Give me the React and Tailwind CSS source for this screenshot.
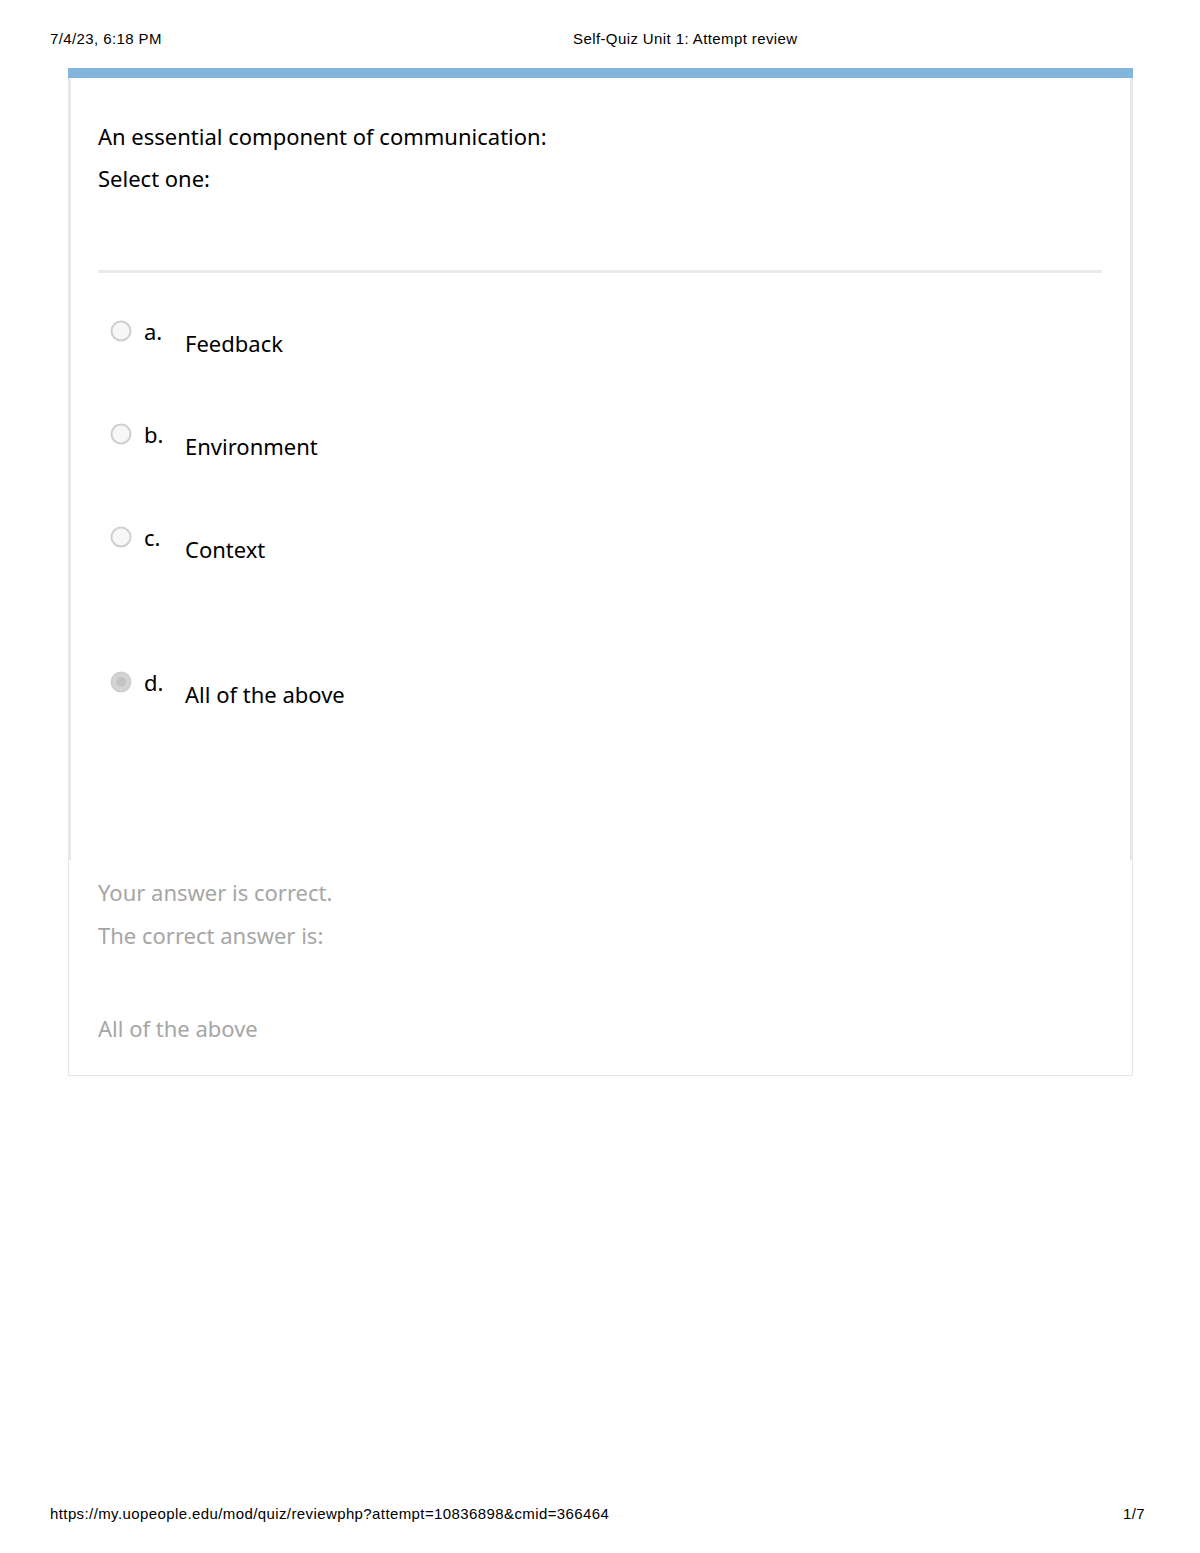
import React from "react";

const options = [
  { letter: "a.", text: "Feedback", checked: false, gap: "h-[63px]" },
  { letter: "b.", text: "Environment", checked: false, gap: "h-[63px]" },
  { letter: "c.", text: "Context", checked: false, gap: "h-[105px]" },
  { letter: "d.", text: "All of the above", checked: true, gap: "" },
];

function Radio({ checked }) {
  return (
    <svg width="22" height="22" viewBox="0 0 22 22" className="shrink-0">
      <circle cx="11" cy="11" r="9.5" fill={checked ? "#d4d4d4" : "#f7f7f7"} stroke="#cfcfcf" strokeWidth="2" />
      {checked && <circle cx="11" cy="11" r="5" fill="#c4c4c4" />}
    </svg>
  );
}

export default function App() {
  return (
    <div className="w-[1200px] h-[1553px] bg-white relative flex flex-col">
      <div className="flex pt-[30px] pl-[50px] text-[15px] text-black font-['Liberation_Sans',Arial,sans-serif] leading-[17px] tracking-[0.4px]">
        <span className="w-[523px]">7/4/23, 6:18 PM</span>
        <span>Self-Quiz Unit 1: Attempt review</span>
      </div>

      <div className="ml-[68px] mt-[21px] w-[1065px] font-['Noto_Sans','Open_Sans',sans-serif]">
        <div className="h-[10px] bg-[#82b6dd]" />
        <div className="border-x-[3px] border-[#e4e7eb] pl-[27px] pr-[28px] h-[782px]">
          <div className="pt-[37px] text-[22px] leading-[42px] text-black">
            <p>An essential component of communication:</p>
            <p>Select one:</p>
          </div>
          <div className="mt-[71px] h-[3px] bg-[#e8eaed]" />
          <div className="pt-[39px] pl-[12px]">
            {options.map((o) => (
              <div key={o.letter}>
                <div className="flex items-start h-[40px]">
                  <div className="pt-[8px]"><Radio checked={o.checked} /></div>
                  <span className="ml-[12px] w-[41px] text-[22px] leading-[38px] text-black">{o.letter}</span>
                  <span className="mt-[12px] text-[22px] leading-[38px] text-black">{o.text}</span>
                </div>
                {o.gap && <div className={o.gap} />}
              </div>
            ))}
          </div>
        </div>
        <div className="border border-t-0 border-[#e4e6ea] pl-[29px] pt-[11px] pb-[25px] text-[22px] leading-[43px] text-[#a6a6a6]">
          <p>Your answer is correct.</p>
          <p>The correct answer is:</p>
          <p className="mt-[50px]">All of the above</p>
        </div>
      </div>

      <div className="absolute left-0 top-[1505px] w-full flex justify-between pl-[50px] pr-[55px] text-[15px] text-black font-['Liberation_Sans',Arial,sans-serif] leading-[17px] tracking-[0.4px]">
        <span>https://my.uopeople.edu/mod/quiz/reviewphp?attempt=10836898&amp;cmid=366464</span>
        <span>1/7</span>
      </div>
    </div>
  );
}
